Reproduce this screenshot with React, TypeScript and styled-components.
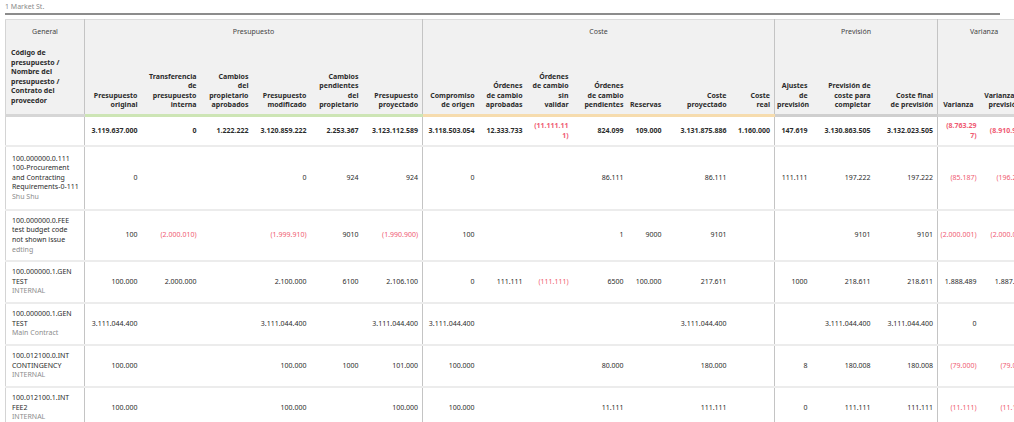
import React from 'react'
import styled, { createGlobalStyle } from 'styled-components'

const Global = createGlobalStyle`
  body { margin: 0; background: #fff; font-family: "Noto Sans", "Open Sans", sans-serif; }
`

type Group = 'gen' | 'pre' | 'cos' | 'prev' | 'var'

const cols: { label: string[]; w: number; g: Group; last?: boolean }[] = [
  { label: ['Presupuesto', 'original'], w: 57, g: 'pre' },
  { label: ['Transferencia', 'de', 'presupuesto', 'interna'], w: 59, g: 'pre' },
  { label: ['Cambios', 'del', 'propietario', 'aprobados'], w: 52, g: 'pre' },
  { label: ['Presupuesto', 'modificado'], w: 58, g: 'pre' },
  { label: ['Cambios', 'pendientes', 'del', 'propietario'], w: 52, g: 'pre' },
  { label: ['Presupuesto', 'proyectado'], w: 60, g: 'pre', last: true },
  { label: ['Compromiso', 'de origen'], w: 56, g: 'cos' },
  { label: ['Órdenes', 'de cambio', 'aprobadas'], w: 48, g: 'cos' },
  { label: ['Órdenes', 'de cambio', 'sin', 'validar'], w: 46, g: 'cos' },
  { label: ['Órdenes', 'de cambio', 'pendientes'], w: 55, g: 'cos' },
  { label: ['Reservas'], w: 38, g: 'cos' },
  { label: ['Coste', 'proyectado'], w: 65, g: 'cos' },
  { label: ['Coste', 'real'], w: 44, g: 'cos', last: true },
  { label: ['Ajustes', 'de', 'previsión'], w: 37, g: 'prev' },
  { label: ['Previsión de', 'coste para', 'completar'], w: 63, g: 'prev' },
  { label: ['Coste final', 'de previsión'], w: 63, g: 'prev', last: true },
  { label: ['Varianza'], w: 43, g: 'var' },
  { label: ['Varianza de', 'previsión'], w: 50, g: 'var' },
]

const lineColor: Record<Group, string> = {
  gen: '#d6d6d6',
  pre: '#cde5b5',
  cos: '#f6dcae',
  prev: '#cfcfcf',
  var: '#d6d6d6',
}

type Row = { code: string[]; sub: string; h: number; v: string[] }

const totals = [
  '3.119.637.000', '0', '1.222.222', '3.120.859.222', '2.253.367', '3.123.112.589',
  '3.118.503.054', '12.333.733', '(11.111.111)', '824.099', '109.000', '3.131.875.886', '1.160.000',
  '147.619', '3.130.863.505', '3.132.023.505', '(8.763.297)', '(8.910.916)',
]

const rows: Row[] = [
  {
    code: ['100.000000.0.111', '100-Procurement', 'and Contracting', 'Requirements-0-111'], sub: 'Shu Shu', h: 64,
    v: ['0', '', '', '0', '924', '924', '0', '', '', '86.111', '', '86.111', '', '111.111', '197.222', '197.222', '(85.187)', '(196.298)'],
  },
  {
    code: ['100.000000.0.FEE', 'test budget code', 'not shown issue'], sub: 'edting', h: 51,
    v: ['100', '(2.000.010)', '', '(1.999.910)', '9010', '(1.990.900)', '100', '', '', '1', '9000', '9101', '', '', '9101', '9101', '(2.000.001)', '(2.000.001)'],
  },
  {
    code: ['100.000000.1.GEN', 'TEST'], sub: 'INTERNAL', h: 42,
    v: ['100.000', '2.000.000', '', '2.100.000', '6100', '2.106.100', '0', '111.111', '(111.111)', '6500', '100.000', '217.611', '', '1000', '218.611', '218.611', '1.888.489', '1.887.489'],
  },
  {
    code: ['100.000000.1.GEN', 'TEST'], sub: 'Main Contract', h: 42,
    v: ['3.111.044.400', '', '', '3.111.044.400', '', '3.111.044.400', '3.111.044.400', '', '', '', '', '3.111.044.400', '', '', '3.111.044.400', '3.111.044.400', '0', '0'],
  },
  {
    code: ['100.012100.0.INT', 'CONTINGENCY'], sub: 'INTERNAL', h: 42,
    v: ['100.000', '', '', '100.000', '1000', '101.000', '100.000', '', '', '80.000', '', '180.000', '', '8', '180.008', '180.008', '(79.000)', '(79.008)'],
  },
  {
    code: ['100.012100.1.INT', 'FEE2'], sub: 'INTERNAL', h: 42,
    v: ['100.000', '', '', '100.000', '', '100.000', '100.000', '', '', '11.111', '', '111.111', '', '0', '111.111', '111.111', '(11.111)', '(11.111)'],
  },
]

const Page = styled.div`
  width: 1014px;
  height: 422px;
  overflow: hidden;
  padding: 3px 0 0 5px;
  box-sizing: border-box;
`

const Title = styled.div`
  font-size: 7px;
  color: #8a8a8a;
  line-height: 8px;
`

const Rule = styled.div`
  width: 995px;
  height: 2px;
  background: #8c8c8c;
  margin: 2px 0 4px;
`

const Table = styled.table`
  border-collapse: collapse;
  table-layout: fixed;
  width: 1025px;
  font-size: 7px;
  color: #2b2b2b;
  border-left: 1px solid #d4d4d4;
`

const GroupTh = styled.th`
  background: #f1f1f1;
  font-weight: 400;
  color: #444;
  height: 22px;
  text-align: center;
  vertical-align: middle;
  padding: 0;
  white-space: nowrap;
  border-right: 1px solid #c4c4c4;
  border-top: 1px solid #dcdcdc;
`

const ColTh = styled.th<{ $g: Group; $last?: boolean; $center?: boolean }>`
  background: #f1f1f1;
  height: 68px;
  padding: 0 4px 4px 2px;
  vertical-align: bottom;
  text-align: ${p => (p.$center ? 'center' : 'right')};
  font-weight: 700;
  line-height: 9.6px;
  white-space: nowrap;
  border-bottom: 3px solid ${p => lineColor[p.$g]};
  border-right: ${p => (p.$last ? '1px solid #c4c4c4' : 'none')};
`

const GenTh = styled.th`
  background: #f1f1f1;
  vertical-align: top;
  text-align: left;
  font-weight: 700;
  line-height: 9.6px;
  padding: 6px 5px 0;
  border-bottom: 3px solid #d6d6d6;
  border-right: 1px solid #c4c4c4;
`

const Tr = styled.tr<{ $h: number }>`
  height: ${p => p.$h}px;
  border-bottom: 2px solid #ececec;
`

const Td = styled.td<{ $bold?: boolean; $neg?: boolean; $last?: boolean }>`
  text-align: right;
  vertical-align: middle;
  padding: 0 4px 0 2px;
  font-weight: ${p => (p.$bold ? 700 : 400)};
  color: ${p => (p.$neg ? '#ef5a72' : '#2b2b2b')};
  line-height: 9.6px;
  word-break: break-all;
  border-right: ${p => (p.$last ? '1px solid #c4c4c4' : 'none')};
`

const CodeTd = styled.td`
  padding: 0 4px 0 6px;
  vertical-align: middle;
  line-height: 9.6px;
  white-space: nowrap;
  overflow: hidden;
  border-right: 1px solid #c4c4c4;
`

const Sub = styled.div`
  color: #8c8c8c;
`

const Cell: React.FC<{ v: string; i: number; bold?: boolean }> = ({ v, i, bold }) => (
  <Td $bold={bold} $neg={v.startsWith('(')} $last={cols[i].last}>{v}</Td>
)

export default function App() {
  return (
    <Page>
      <Global />
      <Title>1 Market St.</Title>
      <Rule />
      <Table>
        <colgroup>
          <col style={{ width: 79 }} />
          {cols.map((c, i) => <col key={i} style={{ width: c.w }} />)}
        </colgroup>
        <thead>
          <tr>
            <GroupTh>General</GroupTh>
            <GroupTh colSpan={6}>Presupuesto</GroupTh>
            <GroupTh colSpan={7}>Coste</GroupTh>
            <GroupTh colSpan={3}>Previsión</GroupTh>
            <GroupTh colSpan={2}>Varianza</GroupTh>
          </tr>
          <tr>
            <GenTh>Código de<br />presupuesto /<br />Nombre del<br />presupuesto /<br />Contrato del<br />proveedor</GenTh>
            {cols.map((c, i) => (
              <ColTh key={i} $g={c.g} $last={c.last} $center={c.label[0] === 'Reservas' || c.g === 'var'}>
                {c.label.map((l, j) => <React.Fragment key={j}>{j > 0 && <br />}{l}</React.Fragment>)}
              </ColTh>
            ))}
          </tr>
        </thead>
        <tbody>
          <Tr $h={30}>
            <CodeTd />
            {totals.map((v, i) => <Cell key={i} v={v} i={i} bold />)}
          </Tr>
          {rows.map((r, k) => (
            <Tr key={k} $h={r.h}>
              <CodeTd>
                {r.code.map((l, j) => <div key={j}>{l}</div>)}
                <Sub>{r.sub}</Sub>
              </CodeTd>
              {r.v.map((v, i) => <Cell key={i} v={v} i={i} />)}
            </Tr>
          ))}
        </tbody>
      </Table>
    </Page>
  )
}
